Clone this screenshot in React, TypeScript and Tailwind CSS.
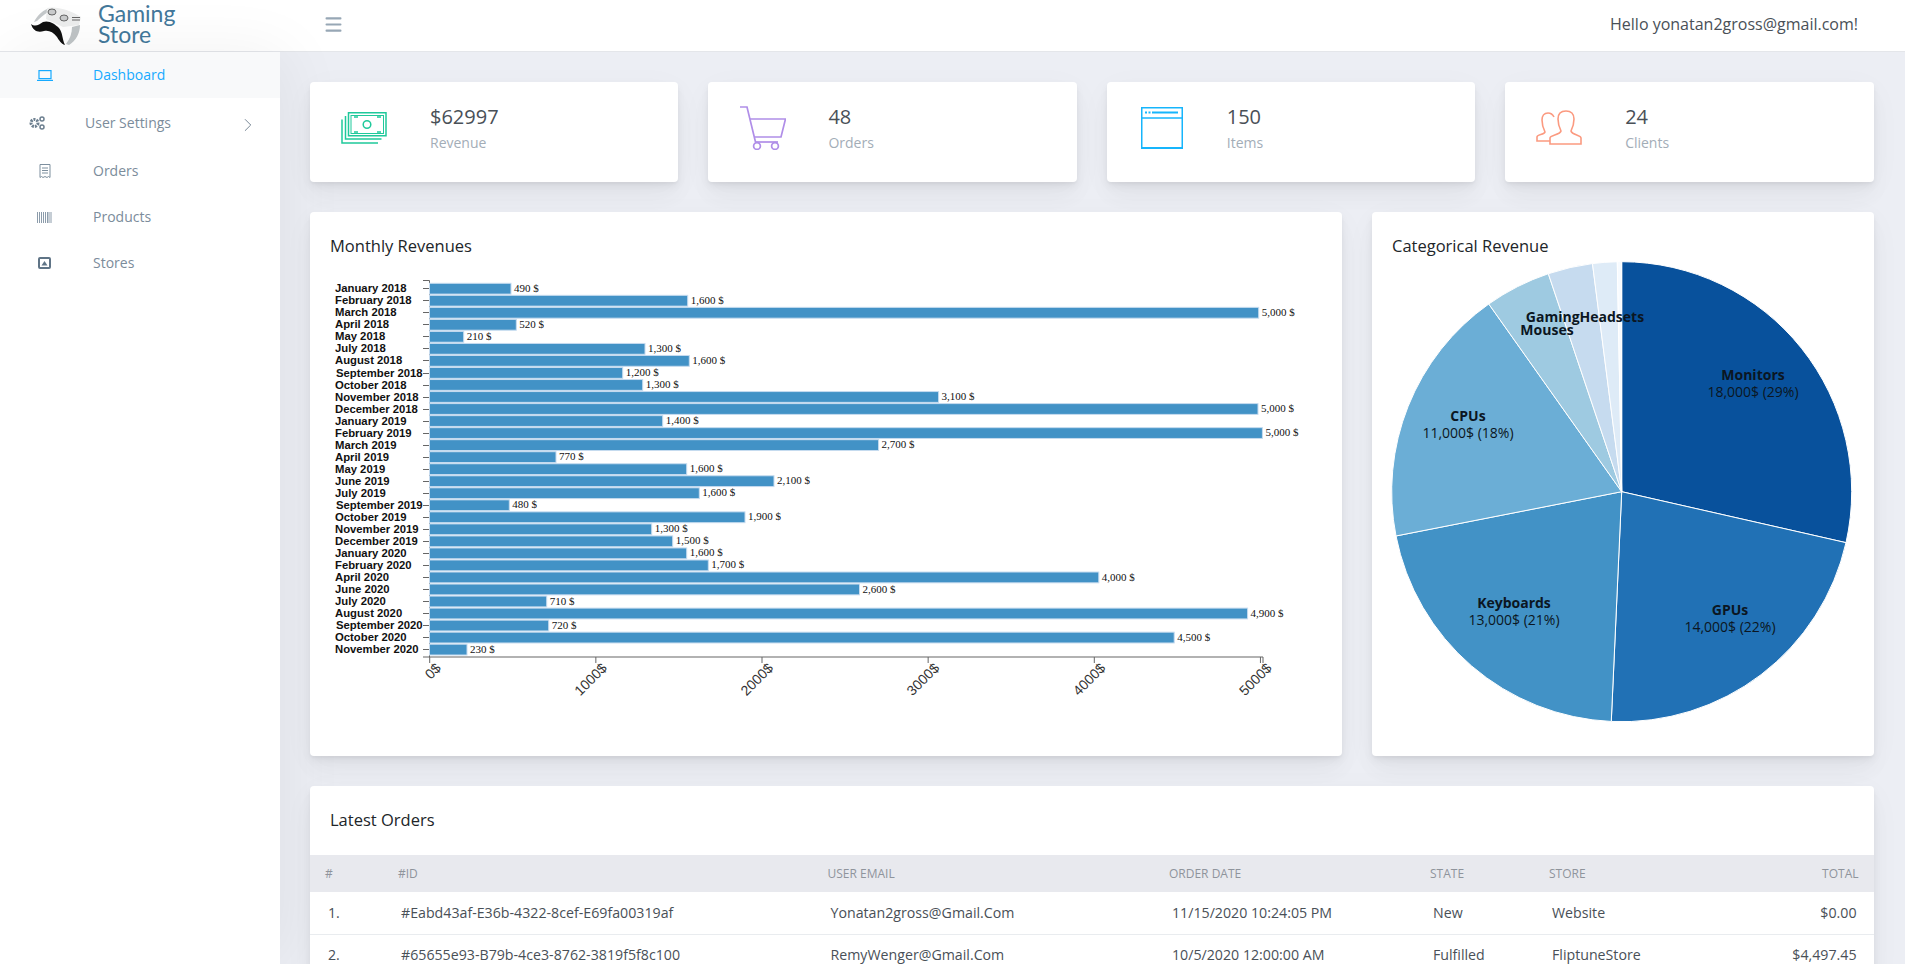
import { ChevronRight, Menu } from "lucide-react";

const bars: [string, number, string][] = [
  ["January 2018", 511, "490 $"],
  ["February 2018", 687.7, "1,600 $"],
  ["March 2018", 1258.7, "5,000 $"],
  ["April 2018", 516.3, "520 $"],
  ["May 2018", 463.7, "210 $"],
  ["July 2018", 645, "1,300 $"],
  ["August 2018", 689.3, "1,600 $"],
  ["September 2018", 622.7, "1,200 $"],
  ["October 2018", 642.7, "1,300 $"],
  ["November 2018", 938.6, "3,100 $"],
  ["December 2018", 1258, "5,000 $"],
  ["January 2019", 662.7, "1,400 $"],
  ["February 2019", 1262.4, "5,000 $"],
  ["March 2019", 878.6, "2,700 $"],
  ["April 2019", 556, "770 $"],
  ["May 2019", 686.7, "1,600 $"],
  ["June 2019", 774, "2,100 $"],
  ["July 2019", 699.3, "1,600 $"],
  ["September 2019", 509.3, "480 $"],
  ["October 2019", 745, "1,900 $"],
  ["November 2019", 651.7, "1,300 $"],
  ["December 2019", 672.7, "1,500 $"],
  ["January 2020", 686.7, "1,600 $"],
  ["February 2020", 708.3, "1,700 $"],
  ["April 2020", 1098.8, "4,000 $"],
  ["June 2020", 859.5, "2,600 $"],
  ["July 2020", 546.7, "710 $"],
  ["August 2020", 1247.6, "4,900 $"],
  ["September 2020", 548.7, "720 $"],
  ["October 2020", 1174.2, "4,500 $"],
  ["November 2020", 467, "230 $"],
];

const ticks = [0, 1000, 2000, 3000, 4000, 5000];

const slices: [number, number, string][] = [
  [0, 102.8, "#08519c"],
  [102.8, 182.6, "#2171b5"],
  [182.6, 258.9, "#4292c6"],
  [258.9, 324.7, "#6baed6"],
  [324.7, 341.4, "#9ecae1"],
  [341.4, 352.7, "#c6dbef"],
  [352.7, 358.9, "#deebf7"],
  [358.9, 360, "#f7fbff"],
];

const pieLabels: [string, string, number, number][] = [
  ["Monitors", "18,000$ (29%)", 1753, 380],
  ["GPUs", "14,000$ (22%)", 1730, 615],
  ["Keyboards", "13,000$ (21%)", 1514, 608],
  ["CPUs", "11,000$ (18%)", 1468, 421],
];

const rows = [
  ["1.", "#Eabd43af-E36b-4322-8cef-E69fa00319af", "Yonatan2gross@Gmail.Com", "11/15/2020 10:24:05 PM", "New", "Website", "$0.00"],
  ["2.", "#65655e93-B79b-4ce3-8762-3819f5f8c100", "RemyWenger@Gmail.Com", "10/5/2020 12:00:00 AM", "Fulfilled", "FliptuneStore", "$4,497.45"],
];

function slicePath(a: number, b: number) {
  const cx = 1621.7;
  const cy = 491.7;
  const r = 230;
  const p = (d: number) => {
    const t = (d * Math.PI) / 180;
    return `${cx + r * Math.sin(t)} ${cy - r * Math.cos(t)}`;
  };
  return `M${cx} ${cy}L${p(a)}A${r} ${r} 0 ${b - a > 180 ? 1 : 0} 1 ${p(b)}Z`;
}

function Logo() {
  return (
    <svg width="60" height="46" viewBox="28 2 60 46" className="shrink-0">
      <path d="M34 21C37 15 42 10 47 8L48 11C43 14 39 18 37 20Z" fill="#c4c8ca" />
      <path d="M47 7C56 5 70 9 81 16L79 24L63 26L46 18Z" fill="#eceded" />
      <path d="M72 26L80 24C80 32 76 40 69 44L66 43C70 38 72 32 72 26Z" fill="#bfc4c6" />
      <ellipse cx="52" cy="11" rx="4" ry="3" fill="#c9cbcc" stroke="#666" strokeWidth="1" />
      <ellipse cx="64" cy="17" rx="4" ry="3" fill="#c9cbcc" stroke="#666" strokeWidth="1" />
      <path d="M72 16.500h8M72 19h8" stroke="#666" strokeWidth="1.200" />
      <path d="M31 23C35 26 39 24 43 21C49 19 55 23 59 27C63 32 62 38 65 44C61 43 59 39 57 36C53 31 49 29 44 30C38 32 33 30 31 23Z" fill="#111" />
    </svg>
  );
}

function CashIcon() {
  return (
    <svg width="46" height="32" viewBox="0 0 46 32" fill="none" stroke="#1fc99b" strokeWidth="1.500" className="-ml-[3px]">
      <rect x="7.500" y="0.750" width="37.500" height="23" />
      <path d="M4.500 4v23h36M1 7.500V31h36" />
      <rect x="10" y="3.500" width="32.500" height="18" strokeWidth="1" />
      <circle cx="26" cy="12.500" r="3.800" />
      <path d="M13 5h4M36 5h4M13 20h4M36 20h4" />
    </svg>
  );
}

function CartIcon() {
  return (
    <svg width="46" height="44" viewBox="0 0 46 44" fill="none" stroke="#b08ee8" strokeWidth="1.700">
      <path d="M0 1h7l8.500 35" />
      <path d="M10 13h35.500L41 31H14" />
      <path d="M15.500 36H38" />
      <circle cx="17" cy="40" r="3.400" />
      <circle cx="35" cy="40" r="3.400" />
    </svg>
  );
}

function BrowserIcon() {
  return (
    <svg width="42" height="42" viewBox="0 0 42 42" fill="none" stroke="#16b5fc" strokeWidth="1.500">
      <rect x="0.750" y="0.750" width="40.500" height="40.500" />
      <path d="M1 11h40" />
      <path d="M0 41h42" strokeWidth="2" />
      <path d="M4 5.500h2M7.500 5.500h2M11 5.500h26" strokeWidth="2" />
    </svg>
  );
}

function UsersIcon() {
  return (
    <svg width="46" height="35" viewBox="0 0 46 35" fill="none" stroke="#fb9a80" strokeWidth="1.600" className="-ml-[3px]">
      <path d="M14 31H1v-4c0-3 7-2 8-5-2-4-3-8-3-12 0-4 2-7 6-7 3 0 5 2 6 4" />
      <path d="M14 34h31v-6c0-3-9-3-10-7 2-4 3-8 3-12 0-5-3-8-8-8s-8 3-8 8c0 4 1 8 3 12-1 4-11 4-11 7z" fill="#fff" />
    </svg>
  );
}

function StatCard({ icon, value, label }: { icon: React.ReactNode; value: string; label: string }) {
  return (
    <div className="flex h-[100px] items-center rounded bg-white pb-[9px] shadow-[0_7.5px_35px_rgba(4,9,20,0.03),0_15px_22px_rgba(4,9,20,0.03),0_4px_8.5px_rgba(4,9,20,0.05),0_2px_3px_rgba(4,9,20,0.03)]">
      <div className="flex w-[120px] justify-center pr-[10px]">{icon}</div>
      <div>
        <div className="text-[20px] leading-[28px] text-[#495057]">{value}</div>
        <div className="mt-[2px] text-[14px] leading-[20px] text-[#a3adb7]">{label}</div>
      </div>
    </div>
  );
}

function MenuRow({ icon, label, x, h, active, chevron }: { icon: React.ReactNode; label: string; x: string; h: string; active?: boolean; chevron?: boolean }) {
  return (
    <div className={`flex items-center ${h} ${active ? "bg-[#f8f9fa]" : ""}`}>
      <div className="ml-[32px] flex w-[25px] justify-center">{icon}</div>
      <span className={`${x} pb-[2px] text-[14px] ${active ? "text-[#16aaff]" : "text-[#7b8c9b]"}`}>{label}</span>
      {chevron && <ChevronRight size={22} strokeWidth={1} className="ml-auto mr-[21px] mt-[3px] text-[#6c7d8c]" />}
    </div>
  );
}

export default function App() {
  return (
    <div className="flex h-screen flex-col overflow-hidden bg-[#eceef4] font-['Open_Sans',sans-serif]">
      <header className="flex h-[52px] shrink-0 items-center border-b border-[#e4e6ea] bg-white">
        <div className="flex w-[280px] items-center pl-[28px]">
          <Logo />
          <div className="ml-[10px] pb-[4px] font-['Lato',sans-serif] text-[23px] leading-[21px] text-[#43789b]">
            Gaming
            <br />
            Store
          </div>
        </div>
        <Menu size={21} strokeWidth={2.300} className="mb-[3px] ml-[42.5px] text-[#97a7b5]" />
        <div className="mb-[4px] ml-auto mr-[47px] text-[16px] text-[#495057]">Hello yonatan2gross@gmail.com!</div>
      </header>
      <div className="flex min-h-0 flex-1">
        <aside className="w-[280px] shrink-0 bg-white shadow-[7px_0_60px_rgba(0,0,0,0.06)]">
          <MenuRow
            active
            h="h-[46px]"
            x="ml-[36px]"
            label="Dashboard"
            icon={
              <svg width="16" height="11" viewBox="0 0 16 11" fill="none" stroke="#16aaff" strokeWidth="1.200">
                <rect x="2" y="0.600" width="12" height="8" />
                <path d="M0 10.400h16" />
              </svg>
            }
          />
          <MenuRow
            chevron
            h="h-[50px]"
            x="ml-[28px]"
            label="User Settings"
            icon={
              <svg width="16" height="14" viewBox="0 0 16 14" className="-ml-[16px]">
                <circle cx="5.500" cy="7" r="3.500" fill="none" stroke="#6c7f8f" strokeWidth="3" strokeDasharray="2 1" />
                <circle cx="13" cy="3" r="2" fill="none" stroke="#6c7f8f" strokeWidth="1.500" />
                <circle cx="13" cy="11" r="2" fill="none" stroke="#6c7f8f" strokeWidth="1.500" />
              </svg>
            }
          />
          <MenuRow
            h="h-[46px]"
            x="ml-[36px]"
            label="Orders"
            icon={
              <svg width="12" height="15" viewBox="0 0 12 15" fill="none" stroke="#7d8f9e" strokeWidth="1">
                <path d="M1 .5h10v13l-1.500-1-1.500 1-2-1-2 1-1.500-1-1.500 1z" />
                <path d="M3 4h6M3 6.500h6M3 9h6" />
              </svg>
            }
          />
          <MenuRow
            h="h-[46px]"
            x="ml-[36px]"
            label="Products"
            icon={
              <svg width="15" height="11" viewBox="0 0 15 11" stroke="#8c9cab">
                <path d="M.5 0v11M2.500 0v11M4.500 0v11M6.500 0v11M8.500 0v11M10.500 0v11M12 0v11M14 0v11" />
              </svg>
            }
          />
          <MenuRow
            h="h-[46px]"
            x="ml-[36px]"
            label="Stores"
            icon={
              <svg width="13" height="12" viewBox="0 0 13 12">
                <rect x="1" y="1" width="11" height="10" rx="1" fill="none" stroke="#5f7486" strokeWidth="2" />
                <path d="M3.500 8.500L6.500 4l3 4.500z" fill="#5f7486" />
              </svg>
            }
          />
        </aside>
        <main className="min-w-0 flex-1 pl-[30px] pr-[31.5px] pt-[30px]">
          <div className="grid grid-cols-4 gap-[30px]">
            <StatCard icon={<CashIcon />} value="$62997" label="Revenue" />
            <StatCard icon={<CartIcon />} value="48" label="Orders" />
            <StatCard icon={<BrowserIcon />} value="150" label="Items" />
            <StatCard icon={<UsersIcon />} value="24" label="Clients" />
          </div>
          <div className="mt-[30px] flex gap-[30px]">
            <section className="h-[544px] w-[1032px] shrink-0 rounded bg-white shadow-[0_7.5px_35px_rgba(4,9,20,0.03),0_15px_22px_rgba(4,9,20,0.03),0_4px_8.5px_rgba(4,9,20,0.05),0_2px_3px_rgba(4,9,20,0.03)]">
              <h5 className="h-[58px] pl-[20px] pt-[24px] text-[16.500px] font-medium leading-[20px] text-[#212529]">Monthly Revenues</h5>
              <svg width="1032" height="480" viewBox="310 270 1032 480" className="block">
                <path d="M423 280.500h6.500V657H423" fill="none" stroke="#666" strokeWidth="1" />
                <path d="M429.500 657H1263" stroke="#666" strokeWidth="1.200" />
                {bars.map(([name, end, value], i) => {
                  const y = 283.3 + i * 12.03;
                  return (
                    <g key={name}>
                      <path d={`M423 ${Math.round(y + 5) + 0.5}h6`} stroke="#666" strokeWidth="1" />
                      <text x={name.startsWith("September") ? 336 : 335} y={y + 9} fontFamily="Liberation Sans, sans-serif" fontSize="11.300" fontWeight="700" fill="#111">
                        {name}
                      </text>
                      <rect x="429.500" y={y} width={end - 429.5} height="10.800" fill="#4292c6" stroke="#c6dbef" strokeWidth="1" />
                      <text x={end + 3} y={y + 8.5} fontFamily="Liberation Serif, serif" fontSize="11" fill="#111">
                        {value}
                      </text>
                    </g>
                  );
                })}
                {ticks.map((t, i) => {
                  const x = 429.7 + i * 166.15;
                  return (
                    <g key={t}>
                      <path d={`M${x} 657v6`} stroke="#666" strokeWidth="1" />
                      <text transform={`translate(${x + 12} 669) rotate(-45)`} textAnchor="end" fontFamily="Liberation Sans, sans-serif" fontSize="14" fill="#333">
                        {t}$
                      </text>
                    </g>
                  );
                })}
                <path d="M1263 657v6" stroke="#666" strokeWidth="1" />
              </svg>
            </section>
            <section className="h-[544px] flex-1 rounded bg-white shadow-[0_7.5px_35px_rgba(4,9,20,0.03),0_15px_22px_rgba(4,9,20,0.03),0_4px_8.5px_rgba(4,9,20,0.05),0_2px_3px_rgba(4,9,20,0.03)]">
              <h5 className="h-[49px] pl-[20px] pt-[24px] text-[16.500px] font-medium leading-[20px] text-[#212529]">Categorical Revenue</h5>
              <svg width="501" height="480" viewBox="1372 261 501 480" className="block">
                {slices.map(([a, b, c]) => (
                  <path key={c} d={slicePath(a, b)} fill={c} stroke="#fff" strokeWidth="1" />
                ))}
                {pieLabels.map(([name, sub, x, y]) => (
                  <g key={name} textAnchor="middle" fontFamily="Open Sans, sans-serif" fontSize="14" fill="#0b1622">
                    <text x={x} y={y} fontWeight="700">
                      {name}
                    </text>
                    <text x={x} y={y + 17}>
                      {sub}
                    </text>
                  </g>
                ))}
                <g textAnchor="middle" fontFamily="Open Sans, sans-serif" fontSize="14" fontWeight="700" fill="#0b1622">
                  <text x="1585" y="322">GamingHeadsets</text>
                  <text x="1547" y="335">Mouses</text>
                </g>
              </svg>
            </section>
          </div>
          <section className="mt-[30px] rounded bg-white shadow-[0_7.5px_35px_rgba(4,9,20,0.03),0_15px_22px_rgba(4,9,20,0.03),0_4px_8.5px_rgba(4,9,20,0.05),0_2px_3px_rgba(4,9,20,0.03)]">
            <h5 className="h-[69px] pl-[20px] pt-[24px] text-[16.500px] font-medium leading-[20px] text-[#212529]">Latest Orders</h5>
            <table className="w-full table-fixed border-collapse">
              <colgroup>
                <col className="w-[73px]" />
                <col className="w-[429.5px]" />
                <col className="w-[341.5px]" />
                <col className="w-[261px]" />
                <col className="w-[119px]" />
                <col className="w-[170px]" />
                <col />
              </colgroup>
              <thead>
                <tr className="h-[37px] bg-[#e8e9ee] text-[12px] uppercase text-[#8f949c]">
                  <th className="pl-[15px] text-left font-normal">#</th>
                  <th className="pl-[15px] text-left font-normal">#ID</th>
                  <th className="pl-[15px] text-left font-normal">User Email</th>
                  <th className="pl-[15px] text-left font-normal">Order Date</th>
                  <th className="pl-[15px] text-left font-normal">State</th>
                  <th className="pl-[15px] text-left font-normal">Store</th>
                  <th className="pr-[15px] text-right font-normal">Total</th>
                </tr>
              </thead>
              <tbody>
                {rows.map((row) => (
                  <tr key={row[0]} className="h-[42px] border-b border-[#e9ecef] text-[14.200px] text-[#495057]">
                    {row.map((cell, i) => (
                      <td key={i} className={i === 6 ? "pr-[17px] text-right" : "pl-[18px]"}>
                        {cell}
                      </td>
                    ))}
                  </tr>
                ))}
              </tbody>
            </table>
          </section>
        </main>
      </div>
    </div>
  );
}
